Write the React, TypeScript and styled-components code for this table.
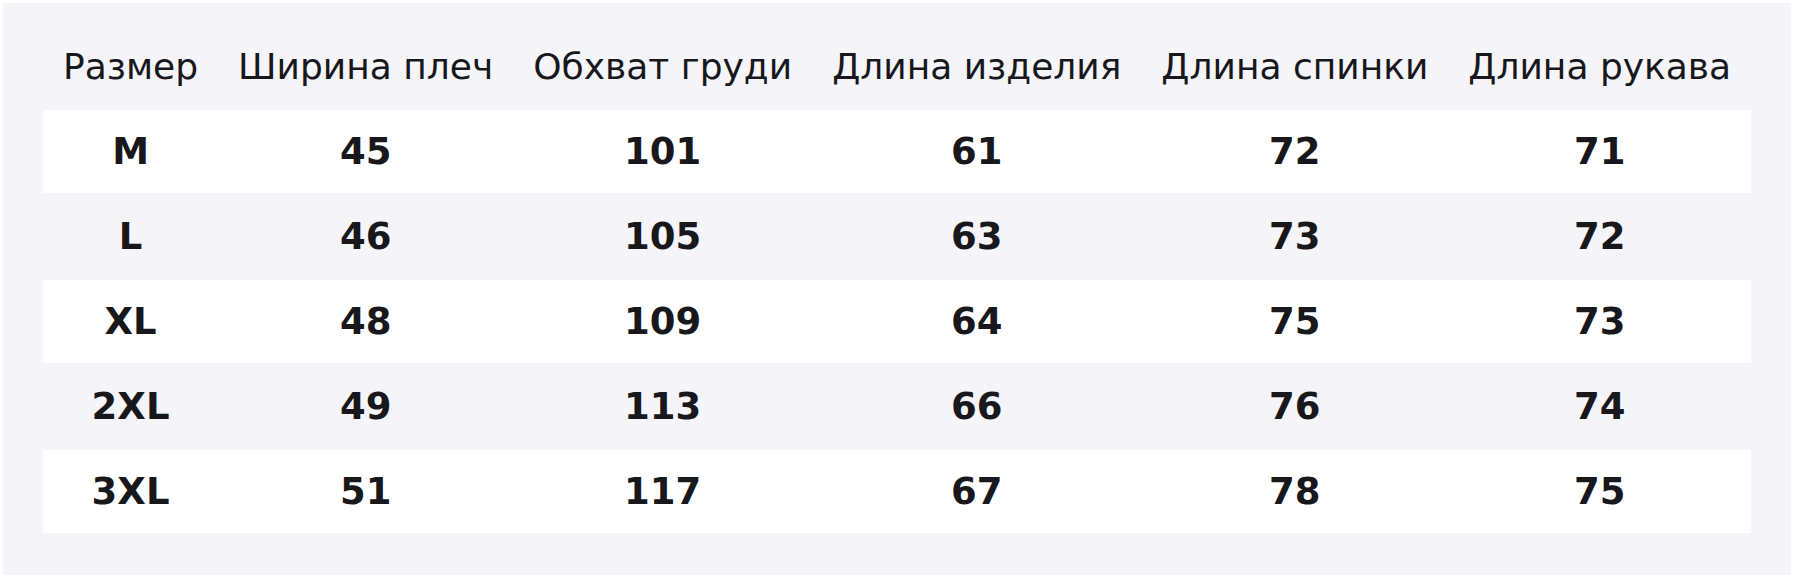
import React from "react";
import styled, { createGlobalStyle } from "styled-components";

const Global = createGlobalStyle`
  html, body { margin: 0; padding: 0; background: #ffffff; }
  body { padding: 3px; font-family: "DejaVu Sans", "Noto Sans", sans-serif; }
`;

const Panel = styled.div`
  background: #f4f4f9;
  padding: 40px 40px 40px;
  height: 572px;
  box-sizing: border-box;
`;

const Table = styled.table`
  width: 100%;
  border-collapse: separate;
  border-spacing: 0 2px;
  color: #17171c;
`;

const HeadCell = styled.th`
  font-weight: 400;
  font-size: 36px;
  line-height: 43px;
  padding: 0 20px 20px;
  text-align: center;
  white-space: nowrap;
`;

const Row = styled.tr<{ $striped: boolean }>`
  background: ${(p) => (p.$striped ? "#ffffff" : "transparent")};
`;

const Cell = styled.td`
  font-weight: 700;
  font-size: 37px;
  height: 83px;
  padding: 0 20px;
  text-align: center;
  vertical-align: middle;
  box-sizing: border-box;
  line-height: 1;
`;

const headers = [
  "Размер",
  "Ширина плеч",
  "Обхват груди",
  "Длина изделия",
  "Длина спинки",
  "Длина рукава",
];

const rows = [
  ["M", "45", "101", "61", "72", "71"],
  ["L", "46", "105", "63", "73", "72"],
  ["XL", "48", "109", "64", "75", "73"],
  ["2XL", "49", "113", "66", "76", "74"],
  ["3XL", "51", "117", "67", "78", "75"],
];

export default function App() {
  return (
    <>
      <Global />
      <Panel>
        <Table>
          <thead>
            <tr>
              {headers.map((h) => (
                <HeadCell key={h}>{h}</HeadCell>
              ))}
            </tr>
          </thead>
          <tbody>
            {rows.map((r, i) => (
              <Row key={r[0]} $striped={i % 2 === 0}>
                {r.map((c, j) => (
                  <Cell key={j}>{c}</Cell>
                ))}
              </Row>
            ))}
          </tbody>
        </Table>
      </Panel>
    </>
  );
}
